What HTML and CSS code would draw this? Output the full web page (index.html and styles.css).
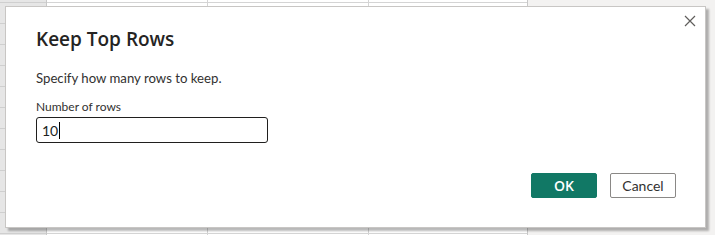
FILE: index.html
```html
<!DOCTYPE html>
<html lang="en">
<head>
<meta charset="utf-8">
<title>Keep Top Rows</title>
<link rel="stylesheet" href="styles.css">
</head>
<body>
<div class="sheet">
  <div class="rowhead"></div>
  <div class="cells"></div>
</div>
<div class="dialog" role="dialog" aria-labelledby="dlg-title">
  <button class="close" aria-label="Close">
    <svg width="12" height="12" viewBox="0 0 12 12"><path d="M1 1L11 11M11 1L1 11" stroke="#605e5c" stroke-width="1.2" fill="none"/></svg>
  </button>
  <h1 class="title" id="dlg-title">Keep Top Rows</h1>
  <p class="desc">Specify how many rows to keep.</p>
  <label class="label" for="rows">Number of rows</label>
  <div class="input"><span class="value">10</span><span class="caret"></span></div>
  <div class="actions">
    <button class="btn btn-primary">OK</button>
    <button class="btn btn-default">Cancel</button>
  </div>
</div>
</body>
</html>
```
FILE: styles.css
```css
html, body {
  margin: 0;
  padding: 0;
}
body {
  width: 715px;
  height: 235px;
  overflow: hidden;
  background: #f3f2f1;
  font-family: Lato, "Open Sans", "Liberation Sans", sans-serif;
  color: #323130;
  position: relative;
}
.sheet {
  width: 528px;
  height: 235px;
  display: flex;
}
.rowhead {
  width: 46px;
  border-right: 1px solid #c8c8c8;
  background-color: #e6e6e6;
  background-image: repeating-linear-gradient(to bottom, #cfcfcf 0 1px, transparent 1px 21px);
  background-position: 0 2px;
}
.cells {
  flex: 1;
  border-right: 1px solid #c8c8c8;
  background-color: #ffffff;
  background-image:
    repeating-linear-gradient(to right, transparent 0 160px, #d4d4d4 160px 161px),
    repeating-linear-gradient(to bottom, #d4d4d4 0 1px, transparent 1px 21px);
  background-position: 0 0, 0 2px;
}
.dialog {
  position: absolute;
  left: 5px;
  top: 6px;
  width: 701px;
  height: 222px;
  box-sizing: border-box;
  background: #ffffff;
  border: 1px solid #c8c6c4;
  box-shadow: 3px 3px 2px rgba(0, 0, 0, 0.28);
  padding: 18px 29px 29px 30px;
  display: flex;
  flex-direction: column;
  align-items: flex-start;
}
.close {
  position: absolute;
  top: 8px;
  right: 9px;
  width: 12px;
  height: 12px;
  padding: 0;
  border: 0;
  background: none;
  display: flex;
}
.title {
  margin: 0;
  font-family: "Open Sans", Lato, sans-serif;
  font-size: 19px;
  line-height: 28px;
  font-weight: 600;
  color: #252423;
}
.desc {
  margin: 15px 0 0;
  font-size: 13.2px;
  line-height: 20px;
  color: #323130;
}
.label {
  margin-top: 11px;
  font-size: 12px;
  line-height: 16px;
  color: #323130;
}
.input {
  margin-top: 2px;
  width: 232px;
  height: 26px;
  box-sizing: border-box;
  border: 1px solid #201f1e;
  border-radius: 3px;
  display: flex;
  align-items: center;
  padding-left: 5px;
  font-size: 14px;
  color: #201f1e;
}
.caret {
  width: 1px;
  height: 17px;
  background: #000;
  margin-left: 1px;
}
.actions {
  margin-top: auto;
  align-self: stretch;
  display: flex;
  justify-content: flex-end;
  gap: 13px;
}
.btn {
  height: 25px;
  box-sizing: border-box;
  border-radius: 2px;
  font-family: "Open Sans", Lato, sans-serif;
  font-size: 14px;
  font-weight: 600;
  padding: 0;
}
.btn-primary {
  width: 66px;
  background: #117865;
  border: 1px solid #117865;
  color: #ffffff;
}
.btn-default {
  width: 66px;
  background: #ffffff;
  border: 1px solid #8a8886;
  color: #323130;
  font-family: Lato, sans-serif;
  font-weight: 400;
}
```
